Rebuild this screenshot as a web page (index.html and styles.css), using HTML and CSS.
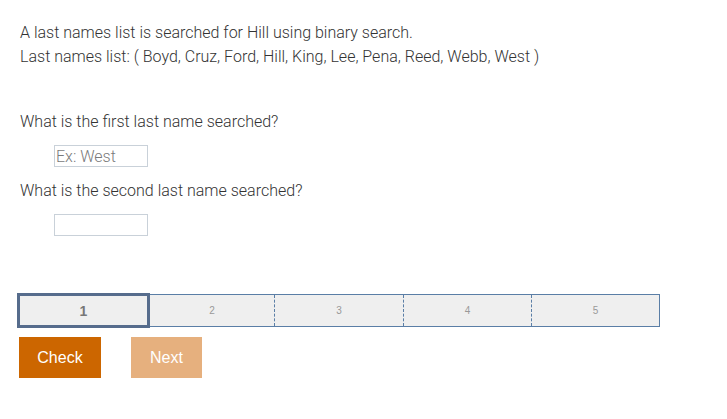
FILE: index.html
```html
<!DOCTYPE html>
<html lang="en">
<head>
	<meta charset="UTF-8">
	<meta name="viewport" content="width=device-width">
	<title>Binary search</title>
	<link rel="stylesheet" href="styles.css">
</head>
<body>
<div class="wrap">
	<p class="prompt">A last names list is searched for Hill using binary search.<br>Last names list: ( Boyd, Cruz, Ford, Hill, King, Lee, Pena, Reed, Webb, West )</p>
	<div class="q q1">What is the first last name searched?</div>
	<input type="text" class="ans" placeholder="Ex: West">
	<div class="q">What is the second last name searched?</div>
	<input type="text" class="ans">
	<div class="steps">
		<div class="step cur">1</div>
		<div class="step s2">2</div>
		<div class="step s3">3</div>
		<div class="step">4</div>
		<div class="step">5</div>
	</div>
	<div class="btns">
		<button class="btn check">Check</button>
		<button class="btn next" disabled>Next</button>
	</div>
</div>
</body>
</html>
```
FILE: styles.css
```css
*{margin:0;padding:0;box-sizing:border-box;}
body{background:#fff;font-family:Roboto, "Liberation Sans", sans-serif;color:#333;}
.wrap{padding:21px 20px 0 20px;}
.prompt{font-size:16px;font-weight:300;line-height:24px;}
.q{font-size:16px;font-weight:300;line-height:24px;margin-top:12px;}
.q1{margin-top:41px;}
.ans{display:block;margin:11px 0 0 34px;width:94px;height:22px;border:1px solid #c9d1d9;padding:0 1px;font-family:Roboto, "Liberation Sans", sans-serif;font-weight:300;font-size:16px;color:#333;outline:none;}
.ans::placeholder{color:#7a7a7a;}
.steps{display:flex;margin:58px 0 0 -2px;width:642px;height:33px;border:1px solid #5a7ea6;background:#efefef;}
.step{flex:0 0 128px;display:flex;align-items:center;justify-content:center;font-family:"Liberation Sans", Arial, sans-serif;font-size:10px;color:#999;border-left:1px dashed #5a7ea6;}
.step.s2{flex-basis:124px;border-left:none;}
.step.s3{flex-basis:129px;}
.step.cur{flex:0 0 133px;margin:-2px 0 -2px -2px;border:3px solid #566c8c;font-size:14px;font-weight:bold;color:#777;}
.btns{display:flex;gap:30px;margin:10px 0 0 -1px;}
.btn{height:41px;border:none;font-family:"Liberation Sans", Arial, sans-serif;font-size:16px;color:#fff;}
.check{width:82px;background:#cc6600;}
.next{width:71px;background:#e6b07e;}
```
